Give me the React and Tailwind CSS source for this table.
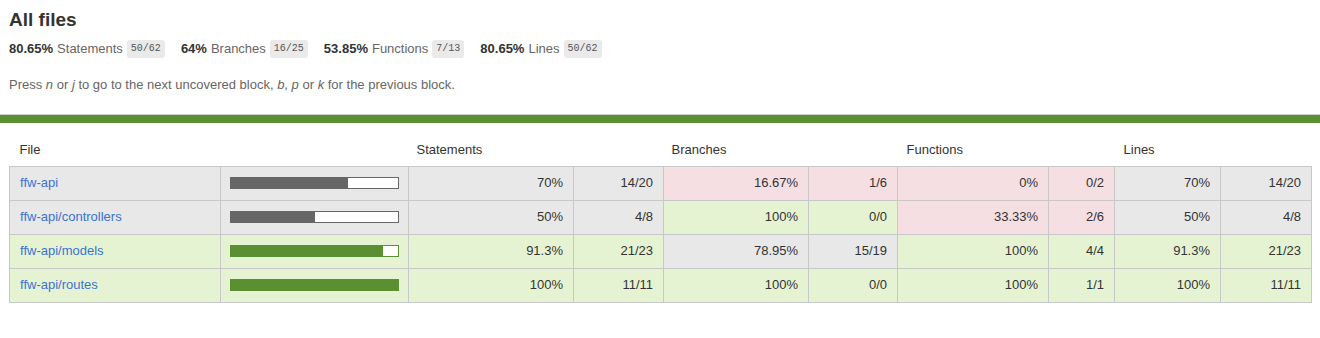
import React from 'react'

const summary = [
  { pct: '80.65%', label: 'Statements', frac: '50/62' },
  { pct: '64%', label: 'Branches', frac: '16/25' },
  { pct: '53.85%', label: 'Functions', frac: '7/13' },
  { pct: '80.65%', label: 'Lines', frac: '50/62' },
]

const tone = {
  low: 'bg-[#f6dfe2]',
  mid: 'bg-[#e8e8e8]',
  high: 'bg-[#e6f3d3]',
}

const rows = [
  {
    file: 'ffw-api',
    bar: 70,
    level: 'mid',
    cells: [
      ['70%', '14/20', 'mid'],
      ['16.67%', '1/6', 'low'],
      ['0%', '0/2', 'low'],
      ['70%', '14/20', 'mid'],
    ],
  },
  {
    file: 'ffw-api/controllers',
    bar: 50,
    level: 'mid',
    cells: [
      ['50%', '4/8', 'mid'],
      ['100%', '0/0', 'high'],
      ['33.33%', '2/6', 'low'],
      ['50%', '4/8', 'mid'],
    ],
  },
  {
    file: 'ffw-api/models',
    bar: 91.3,
    level: 'high',
    cells: [
      ['91.3%', '21/23', 'high'],
      ['78.95%', '15/19', 'mid'],
      ['100%', '4/4', 'high'],
      ['91.3%', '21/23', 'high'],
    ],
  },
  {
    file: 'ffw-api/routes',
    bar: 100,
    level: 'high',
    cells: [
      ['100%', '11/11', 'high'],
      ['100%', '0/0', 'high'],
      ['100%', '1/1', 'high'],
      ['100%', '11/11', 'high'],
    ],
  },
]

function Bar({ value, level }) {
  const fill = level === 'high' ? 'bg-[#5a8f32]' : 'bg-[#666666]'
  const border = level === 'high' ? 'border-[#5a8f32]' : 'border-[#666666]'
  return (
    <div className={`h-[12px] w-full bg-white border ${border} flex`}>
      <div className={`h-full ${fill}`} style={{ width: `${value}%` }} />
    </div>
  )
}

export default function App() {
  return (
    <div className="w-[1320px] h-[338px] bg-white text-[#333] font-['Liberation_Sans',Arial,sans-serif] text-[13px]">
      <div className="px-[9px] pt-[9px]">
        <h1 className="text-[19px] font-bold leading-[22px] text-[#333]">All files</h1>
        <div className="mt-[8px] flex items-center h-[20px]">
          {summary.map((s) => (
            <div key={s.label} className="flex items-center mr-[16px]">
              <span className="font-bold">{s.pct}</span>
              <span className="ml-[4px] text-[#666]">{s.label}</span>
              <span className="ml-[4px] px-[4px] py-[2px] rounded-[3px] bg-[#eaeaea] font-['Liberation_Mono',monospace] text-[10px] leading-[14px] text-[#555]">
                {s.frac}
              </span>
            </div>
          ))}
        </div>
        <p className="mt-[18px] text-[#666] leading-[16px]">
          Press <em>n</em> or <em>j</em> to go to the next uncovered block, <em>b</em>, <em>p</em> or <em>k</em> for the previous block.
        </p>
      </div>

      <div className="mt-[21px] h-[9px] bg-[#5a8f32] border-t border-[#d0d0d0]" />

      <div className="px-[9px] pt-[11px]">
        <table className="table-fixed border-collapse w-[1302px]">
          <colgroup>
            <col className="w-[211px]" />
            <col className="w-[188px]" />
            <col className="w-[165px]" />
            <col className="w-[90px]" />
            <col className="w-[145px]" />
            <col className="w-[89px]" />
            <col className="w-[151px]" />
            <col className="w-[66px]" />
            <col className="w-[106px]" />
            <col className="w-[91px]" />
          </colgroup>
          <thead>
            <tr className="h-[32px] text-left">
              <th className="font-normal px-[10px] border-b border-[#c8c8c8]">File</th>
              <th className="border-b border-[#c8c8c8]" />
              <th colSpan={2} className="font-normal px-[8px] border-b border-[#c8c8c8]">Statements</th>
              <th colSpan={2} className="font-normal px-[8px] border-b border-[#c8c8c8]">Branches</th>
              <th colSpan={2} className="font-normal px-[9px] border-b border-[#c8c8c8]">Functions</th>
              <th colSpan={2} className="font-normal px-[9px] border-b border-[#c8c8c8]">Lines</th>
            </tr>
          </thead>
          <tbody>
            {rows.map((r) => (
              <tr key={r.file} className="h-[34px]">
                <td className={`border border-[#c8c8c8] px-[10px] ${tone[r.level]}`}>
                  <a className="text-[#3a74d2]">{r.file}</a>
                </td>
                <td className={`border border-[#c8c8c8] px-[9px] ${tone[r.level]}`}>
                  <Bar value={r.bar} level={r.level} />
                </td>
                {r.cells.map(([pct, frac, lv], i) => (
                  <React.Fragment key={i}>
                    <td className={`border border-[#c8c8c8] px-[10px] text-right ${tone[lv]}`}>{pct}</td>
                    <td className={`border border-[#c8c8c8] px-[10px] text-right ${tone[lv]}`}>{frac}</td>
                  </React.Fragment>
                ))}
              </tr>
            ))}
          </tbody>
        </table>
      </div>
    </div>
  )
}
